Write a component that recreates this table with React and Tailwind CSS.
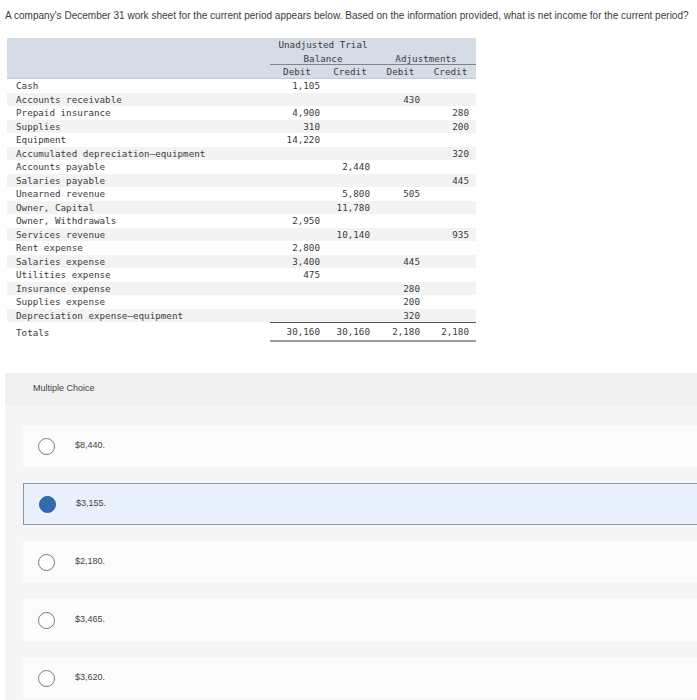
import React from "react";

const rows = [
  ["Cash", "1,105", "", "", ""],
  ["Accounts receivable", "", "", "430", ""],
  ["Prepaid insurance", "4,900", "", "", "280"],
  ["Supplies", "310", "", "", "200"],
  ["Equipment", "14,220", "", "", ""],
  ["Accumulated depreciation\u2014equipment", "", "", "", "320"],
  ["Accounts payable", "", "2,440", "", ""],
  ["Salaries payable", "", "", "", "445"],
  ["Unearned revenue", "", "5,800", "505", ""],
  ["Owner, Capital", "", "11,780", "", ""],
  ["Owner, Withdrawals", "2,950", "", "", ""],
  ["Services revenue", "", "10,140", "", "935"],
  ["Rent expense", "2,800", "", "", ""],
  ["Salaries expense", "3,400", "", "445", ""],
  ["Utilities expense", "475", "", "", ""],
  ["Insurance expense", "", "", "280", ""],
  ["Supplies expense", "", "", "200", ""],
  ["Depreciation expense\u2014equipment", "", "", "320", ""],
];

const pads = ["pr-[4px]", "pr-[6px]", "pr-[5px]", "pr-[7px]"];
const options = ["$8,440.", "$3,155.", "$2,180.", "$3,465.", "$3,620."];

const mono = { fontFamily: '"DejaVu Sans Mono", "Liberation Mono", monospace' };
const sans = { fontFamily: '"Liberation Sans", Arial, sans-serif' };

export default function App() {
  return (
    <div className="w-[697px] h-[700px] bg-white overflow-hidden text-[#333]" style={sans}>
      <p className="pt-[10px] pl-[5px] text-[10px] leading-[12px] whitespace-nowrap tracking-[0.02px] text-[#3a3a3a]">
        A company's December 31 work sheet for the current period appears below. Based on the information provided, what is net income for the current period?
      </p>

      <div className="ml-[7px] mt-[16px] w-[469px] text-[9.25px] leading-[13.5px] text-[#3a3a3a]" style={mono}>
        <div className="grid grid-cols-[263px_54px_52px_49px_51px] bg-[#d6dce6] border-b border-[#c4cad4]">
          <div className="row-span-3" />
          <div className="col-span-2 text-center h-[13.5px]">Unadjusted Trial</div>
          <div className="col-span-2 h-[13.5px]" />
          <div className="col-span-2 text-center h-[13.5px] border-b border-[#7d848e]">Balance</div>
          <div className="col-span-2 text-center h-[13.5px] border-b border-[#7d848e]">Adjustments</div>
          <div className="text-center h-[13px]">Debit</div>
          <div className="text-center h-[13px]">Credit</div>
          <div className="text-center h-[13px]">Debit</div>
          <div className="text-center h-[13px]">Credit</div>
        </div>
        {rows.map((r, i) => (
          <div
            key={i}
            className={`grid grid-cols-[263px_54px_52px_49px_51px] h-[13.5px] ${i % 2 === 1 ? "bg-[#f3f3f3]" : "bg-white"}`}
          >
            <div className="pl-[9px] whitespace-nowrap">{r[0]}</div>
            {r.slice(1).map((v, j) => (
              <div key={j} className={`text-right ${pads[j]}`}>{v}</div>
            ))}
          </div>
        ))}
        <div className="grid grid-cols-[263px_54px_52px_49px_51px] h-[20px] items-center">
          <div className="pl-[9px] pt-[1px]">Totals</div>
          {["30,160", "30,160", "2,180", "2,180"].map((v, j) => (
            <div
              key={j}
              className={`text-right h-full flex items-center justify-end border-t border-b-2 border-t-[#555] border-b-[#9a9a9a] ${pads[j]}`}
            >
              {v}
            </div>
          ))}
        </div>
      </div>

      <div className="ml-[5px] mt-[31px] bg-[#f5f5f5] h-[400px]">
        <div className="h-[32px] bg-[#f0f0f0] flex items-center pl-[28px] text-[9px] text-[#444]">
          Multiple Choice
        </div>
        <div className="pl-[18px] pt-[20px] flex flex-col gap-[16px]">
          {options.map((o, i) => {
            const sel = i === 1;
            return (
              <div
                key={i}
                className={`h-[42px] flex items-center ${
                  sel ? "bg-[#e8f1fb] border border-r-0 border-[#8c99a8]" : "bg-[#fbfbfb]"
                }`}
              >
                <div className={`ml-[15px] w-[17px] h-[17px] rounded-full shrink-0 ${sel ? "bg-[#336bb3] border border-[#2c5d9c]" : "bg-white border border-[#777]"}`} />
                <span className="ml-[20px] text-[9px] text-[#444]">{o}</span>
              </div>
            );
          })}
        </div>
      </div>
    </div>
  );
}
